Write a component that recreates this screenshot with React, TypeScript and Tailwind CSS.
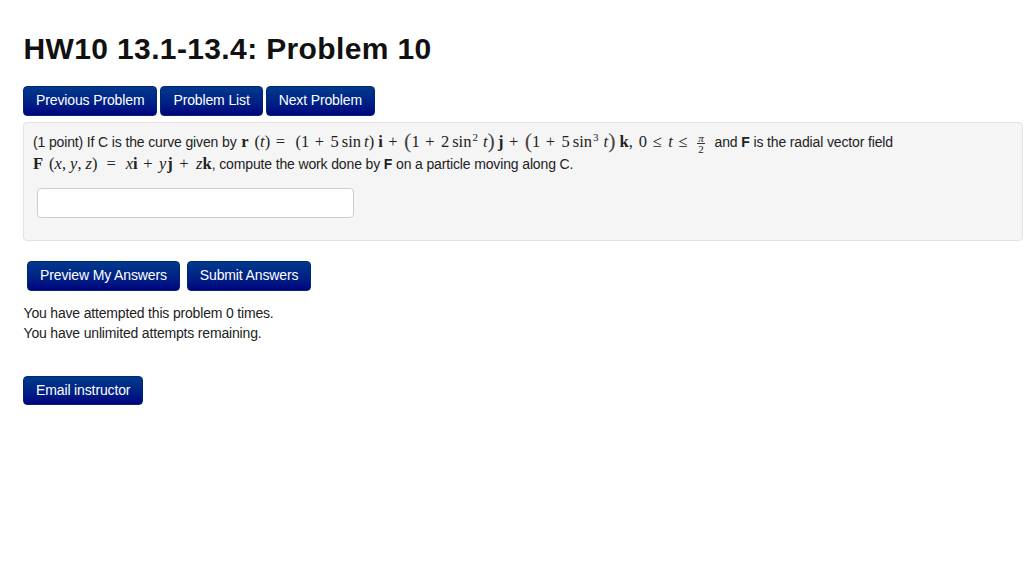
const btn =
  "h-[29.5px] pb-[1px] px-3 rounded-[4px] border border-[#002a6e] bg-gradient-to-b from-[#00388c] to-[#00007f] text-white text-[14px] tracking-[-0.13px] leading-[20px] font-['Liberation_Sans',Arial,sans-serif]";

function M({ children }: { children: React.ReactNode }) {
  return <span className="font-['Liberation_Serif',serif] text-[16.5px] leading-none tracking-normal text-[#222]">{children}</span>;
}
function I({ children }: { children: React.ReactNode }) {
  return <span className="italic">{children}</span>;
}
function B({ children }: { children: React.ReactNode }) {
  return <span className="font-bold">{children}</span>;
}
function Op({ children }: { children: React.ReactNode }) {
  return <span className="ml-[5.5px] mr-[6.5px]">{children}</span>;
}
function Big({ children }: { children: React.ReactNode }) {
  return <span className="text-[22px] leading-none text-[#444] align-[-1px]">{children}</span>;
}
function Sup({ children }: { children: React.ReactNode }) {
  return <sup className="text-[11px] leading-none relative top-[-6px] ml-[1px] align-baseline">{children}</sup>;
}

export default function App() {
  return (
    <div className="w-[1024px] h-[569px] bg-white text-[#222] overflow-hidden pl-[23px] pr-[1px] font-['Liberation_Sans',Arial,sans-serif]">
      <h1 className="pl-[0.5px] pt-[30px] text-[30px] tracking-[0.37px] leading-[37px] font-bold text-[#111]">HW10 13.1-13.4: Problem 10</h1>
      <div className="mt-[19px] flex gap-[3px]">
        <button className={btn}>Previous Problem</button>
        <button className={btn}>Problem List</button>
        <button className={btn}>Next Problem</button>
      </div>
      <div className="mt-[6.5px] h-[118.5px] border border-[#e3e3e3] rounded-[4px] bg-[#f5f5f5] px-[9px] pt-[7px] text-[14px] tracking-[-0.14px] leading-[22px] whitespace-nowrap">
        <div className="h-[23px]">
          (1 point) If C is the curve given by{" "}
          <M>
            <span className="ml-[1px]"><B>r</B></span>
            <span className="ml-[6px]">(<I>t</I>)</span>
            <span className="ml-[5.5px] mr-[10.5px]">=</span>(1<Op>+</Op>5<span className="ml-[3px]">sin</span>
            <span className="ml-[3px]"><I>t</I></span>)
            <span className="ml-[4px]"><B>i</B></span>
            <Op>+</Op>
            <Big>(</Big>1<Op>+</Op>2<span className="ml-[3px]">sin</span>
            <Sup>2</Sup>
            <span className="ml-[5px]"><I>t</I></span>
            <Big>)</Big>
            <span className="ml-[3px]"><B>j</B></span>
            <Op>+</Op>
            <Big>(</Big>1<Op>+</Op>5<span className="ml-[3px]">sin</span>
            <Sup>3</Sup>
            <span className="ml-[5px]"><I>t</I></span>
            <Big>)</Big>
            <span className="ml-[4px]"><B>k</B></span>,
            <span className="ml-[6px]">0</span>
            <Op>≤</Op><I>t</I><Op>≤</Op>
          </M>
          <span className="inline-flex flex-col items-center align-middle font-['Liberation_Serif',serif] text-[11px] leading-[10px] ml-[3px] mr-[6px]">
            <I>π</I>
            <span className="border-t border-[#333] w-[8px] text-center">2</span>
          </span>{" "}
          and <b>F</b> is the radial vector field
        </div>
        <div className="h-[22px]">
          <M>
            <B>F</B>
            <span className="ml-[6px]">(<I>x</I>,</span>
            <span className="ml-[4px]"><I>y</I>,</span>
            <span className="ml-[4px]"><I>z</I>)</span>
            <span className="ml-[9px] mr-[10px]">=</span><I>x</I><B>i</B>
            <Op>+</Op><I>y</I><span className="ml-[1px] mr-[1px]"><B>j</B></span>
            <Op>+</Op><span className="ml-[1px]"><I>z</I></span><B>k</B>
          </M>
          , compute the work done by <b>F</b> on a particle moving along C.
        </div>
        <input className="block mt-[13px] ml-[3.5px] w-[317px] h-[30px] bg-white border border-[#ccc] rounded-[4px]" />
      </div>
      <div className="mt-[20.5px] ml-[4px] flex gap-[7px]">
        <button className={btn}>Preview My Answers</button>
        <button className={btn}>Submit Answers</button>
      </div>
      <div className="pl-[0.5px] mt-[12px] text-[14px] tracking-[-0.175px] leading-[20px]">
        <div>You have attempted this problem 0 times.</div>
        <div>You have unlimited attempts remaining.</div>
      </div>
      <div className="mt-[33px]">
        <button className={btn}>Email instructor</button>
      </div>
    </div>
  );
}
